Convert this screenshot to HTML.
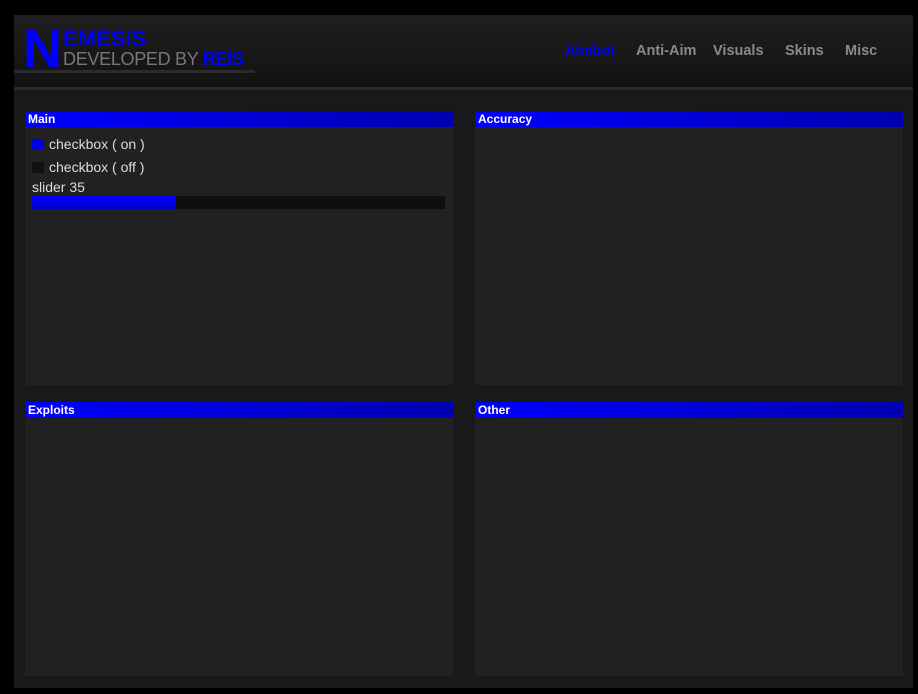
<!DOCTYPE html>
<html><head><meta charset="utf-8"><style>
*{margin:0;padding:0;box-sizing:border-box}
body{width:918px;height:694px;background:#000;position:relative;overflow:hidden;font-family:"Liberation Sans",sans-serif}
#win{position:absolute;left:14px;top:15px;width:899px;height:673px;background:#191919}
#hdr{position:absolute;left:0;top:0;width:899px;height:72px;background:linear-gradient(#1f1f1f,#121212)}
#sep{position:absolute;left:0;top:72px;width:899px;height:3px;background:#2a2a2a}
#ul{position:absolute;left:0;top:55px;width:241px;height:3px;background:#2b2b2b}
.N{position:absolute;left:9px;top:8px;font-size:54px;font-weight:bold;color:#0000ff;line-height:52px;letter-spacing:-2px}
.em{position:absolute;left:49px;top:12px;font-size:22px;font-weight:bold;color:#0000ff;line-height:24px}
.dev{position:absolute;left:49px;top:34px;font-size:18px;color:#777;line-height:21px;letter-spacing:-0.3px;white-space:nowrap}
.dev b{color:#0000ff;font-weight:bold}
.tab{position:absolute;top:28px;font-size:14.5px;font-weight:bold;color:#8a8a8a;line-height:17px}
.panel{position:absolute;width:428px;height:274px;background:#212121}
.tt{height:16px;background:linear-gradient(90deg,#0000ff,#0000b0);color:#fff;font-weight:bold;font-size:12px;line-height:16px;padding-left:3px}
.cb{position:absolute;left:7px;width:12px;height:11px}
.lbl{position:absolute;left:24px;font-size:14px;color:#ddd;line-height:15px}
</style></head><body>
<div id="win">
<div id="hdr">
<div class="N">N</div><div class="em">EMESIS</div>
<div class="dev">DEVELOPED BY <b>REIS</b></div>
<div id="ul"></div>
<div class="tab" style="left:551px;color:#0000ff">Aimbot</div>
<div class="tab" style="left:622px">Anti-Aim</div>
<div class="tab" style="left:699px">Visuals</div>
<div class="tab" style="left:771px">Skins</div>
<div class="tab" style="left:831px">Misc</div>
</div>
<div id="sep"></div>
<div class="panel" style="left:11px;top:96px"><div class="tt">Main</div>
<div class="cb" style="top:28px;background:#0000e0"></div><div class="lbl" style="top:26px">checkbox ( on )</div>
<div class="cb" style="top:51px;background:#111"></div><div class="lbl" style="top:49px">checkbox ( off )</div>
<div class="lbl" style="left:7px;top:69px">slider 35</div>
<div style="position:absolute;left:7px;top:85px;width:413px;height:13px;background:#0f0f0f"><div style="width:144px;height:13px;background:linear-gradient(#0000ff,#0000c8)"></div></div>
</div>
<div class="panel" style="left:461px;top:96px"><div class="tt">Accuracy</div></div>
<div class="panel" style="left:11px;top:387px"><div class="tt">Exploits</div></div>
<div class="panel" style="left:461px;top:387px"><div class="tt">Other</div></div>
</div>
</body></html>
